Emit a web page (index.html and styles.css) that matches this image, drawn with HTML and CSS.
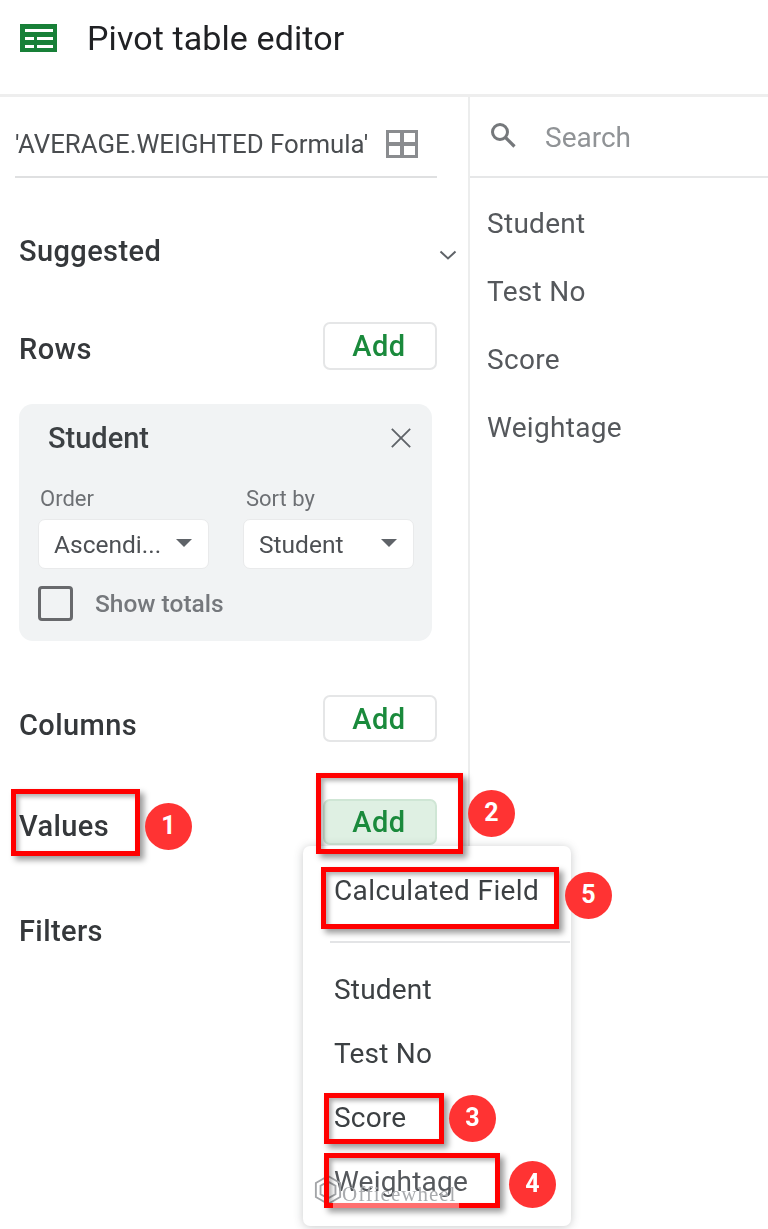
FILE: index.html
```html
<!DOCTYPE html>
<html lang="en">
<head>
<meta charset="utf-8">
<title>Pivot table editor</title>
<link rel="stylesheet" href="styles.css">
</head>
<body>
<div class="page">
  <header class="header">
    <svg class="sheet-icon" viewBox="0 0 37 28"><path fill="#188038" fill-rule="evenodd" d="M0 0h37v28H0zM5 5v3h28V5zM5 13v3h9v-3zM17 13v3h16v-3zM5 21v3h9v-3zM17 21v3h16v-3z"/></svg>
    <h1 class="title">Pivot table editor</h1>
  </header>
  <main class="body">
    <section class="left">
      <div class="source">
        <span class="source-text">'AVERAGE.WEIGHTED Formula'</span>
        <svg class="grid-icon" viewBox="0 0 32 28"><path fill="#8a8c8f" fill-rule="evenodd" d="M0 0h32v28H0zM3 3v9h11V3zM18 3v9h11V3zM3 16v9h11v-9zM18 16v9h11v-9z"/></svg>
      </div>
      <div class="suggested">
        <span class="label">Suggested</span>
        <svg class="chev" viewBox="0 0 18 10"><path fill="none" stroke="#5f6368" stroke-width="2" d="M1.500 1.500 9 8.500l7.500-7"/></svg>
      </div>
      <div class="row rows-row">
        <span class="label">Rows</span>
        <button class="add">Add</button>
      </div>
      <div class="card">
        <div class="card-head">
          <span class="card-title">Student</span>
          <svg class="close" viewBox="0 0 24 24"><path fill="none" stroke="#5f6368" stroke-width="2" d="M2 2l20 20M22 2 2 22"/></svg>
        </div>
        <div class="selects">
          <div class="field">
            <span class="field-label">Order</span>
            <div class="select"><span>Ascendi...</span><i class="caret"></i></div>
          </div>
          <div class="field">
            <span class="field-label">Sort by</span>
            <div class="select"><span>Student</span><i class="caret"></i></div>
          </div>
        </div>
        <div class="totals"><i class="check"></i><span>Show totals</span></div>
      </div>
      <div class="row columns-row">
        <span class="label">Columns</span>
        <button class="add">Add</button>
      </div>
      <div class="row values-row">
        <span class="label">Values</span>
        <button class="add active">Add</button>
      </div>
      <div class="row filters-row">
        <span class="label">Filters</span>
      </div>
    </section>
    <aside class="right">
      <div class="search">
        <svg class="search-icon" viewBox="0 0 26 26"><circle cx="10" cy="10" r="7.500" fill="none" stroke="#75787b" stroke-width="3"/><path stroke="#75787b" stroke-width="3.200" d="m15.500 15.500 9 9"/></svg>
        <span>Search</span>
      </div>
      <ul class="fields">
        <li>Student</li>
        <li>Test No</li>
        <li>Score</li>
        <li>Weightage</li>
      </ul>
    </aside>
  </main>

  <div class="menu">
    <div class="menu-item calc">Calculated Field</div>
    <div class="menu-sep"></div>
    <div class="menu-item">Student</div>
    <div class="menu-item">Test No</div>
    <div class="menu-item">Score</div>
    <div class="menu-item weight">Weightage</div>
  </div>

  <div class="watermark">
    <svg class="wm-logo" viewBox="0 0 30 32"><path fill="none" stroke="#a3a5a8" stroke-width="2" d="M15 1 28 8.500v15L15 31 2 23.500v-15zM15 7l8 4.500v9L15 25l-8-4.500v-9z"/></svg>
    <span>Officewheel</span>
  </div>

  <div class="mark b1"></div><div class="dot d1">1</div>
  <div class="mark b2"></div><div class="dot d2">2</div>
  <div class="mark b3"></div><div class="dot d3">3</div>
  <div class="mark b4"></div><div class="dot d4">4</div>
  <div class="mark b5"></div><div class="dot d5">5</div>
  <div class="wm-strip"></div>
</div>
</body>
</html>
```
FILE: styles.css
```css
* { box-sizing: border-box; }
html, body { margin: 0; padding: 0; background: #fff; }
body { font-family: Roboto, "Liberation Sans", sans-serif; color: #3c4043; }
.page { position: relative; width: 768px; height: 1229px; overflow: hidden; filter: blur(0.6px); }

.header { height: 97px; display: flex; align-items: flex-start; padding: 24px 0 0 20px; border-bottom: 3px solid #eeeeee; }
.sheet-icon { width: 37px; height: 28px; display: block; }
.title { margin: -5px 0 0 30px; font-size: 34px; line-height: 38px; font-weight: 400; color: #202124; letter-spacing: 0.1px; }

.body { display: flex; height: 1132px; }
.left { width: 470px; height: 760px; border-right: 2px solid #eceded; padding: 0 31px 0 15px; flex: none; }
.right { flex: 1; }

.source { height: 81px; padding-top: 28px; display: flex; align-items: flex-start; border-bottom: 2px solid #dfe0e1; }
.source-text { font-size: 25.800px; line-height: 38px; color: #4a4d50; width: 371px; white-space: nowrap; }
.grid-icon { width: 32px; height: 28px; margin-top: 5px; }

.label { font-size: 29px; line-height: 36px; font-weight: 500; color: #35383b; letter-spacing: 0.4px; }
.suggested { display: flex; justify-content: space-between; align-items: center; margin: 55px -20px 0 4px; height: 36px; }
.chev { width: 18px; height: 10px; margin-top: 7px; }

.row { display: flex; align-items: center; justify-content: space-between; padding-left: 4px; }
.rows-row { margin-top: 53px; height: 48px; }
.rows-row .label { margin-top: 6px; }
.columns-row { margin-top: 54px; height: 47px; }
.columns-row .label { margin-top: 12px; }
.values-row { margin-top: 57px; height: 46px; }
.values-row .label { margin-top: 8px; }
.filters-row { margin-top: 68px; height: 36px; }

.add { width: 114px; height: 100%; background: #fff; border: 2px solid #e5e6e7; border-radius: 7px; color: #1a8a3c; font: 500 29px/36px Roboto, sans-serif; padding: 0 2px 0 0; letter-spacing: 0.5px; }
.add.active { background: #dff0e3; border-color: #cfe6d5; }

.card { margin: 34px 5px 0 4px; height: 237px; background: #f1f3f4; border-radius: 14px; padding: 18px 18px 0 19px; }
.card-head { display: flex; justify-content: space-between; align-items: center; height: 32px; padding: 0 2px 0 10px; }
.card-title { font-size: 29px; line-height: 32px; font-weight: 500; color: #3c4043; }
.close { width: 22px; height: 22px; }
.selects { display: flex; justify-content: space-between; margin-top: 35px; }
.field { display: flex; flex-direction: column; width: 171px; }
.field-label { font-size: 22px; line-height: 26px; color: #6d7074; padding-left: 2px; margin-top: -3px; margin-bottom: 7px; }
.field:last-child .field-label { padding-left: 3px; }
.select { height: 50px; background: #fff; border: 1px solid #e9eaeb; border-radius: 7px; display: flex; align-items: center; justify-content: space-between; padding: 0 16px 0 15px; font-size: 24.500px; color: #4d5054; }
.caret { width: 0; height: 0; border-left: 8px solid transparent; border-right: 8px solid transparent; border-top: 8px solid #5f6368; margin-top: -3px; }
.totals { display: flex; align-items: center; gap: 22px; margin-top: 17px; font-size: 24.500px; color: #75787c; font-weight: 500; }
.check { width: 35px; height: 35px; border: 3px solid #68696c; border-radius: 4px; flex: none; }

.search { height: 81px; display: flex; align-items: center; padding-left: 20px; gap: 29px; border-bottom: 2px solid #e6e7e8; font-size: 28px; color: #909396; }
.search span { margin-top: 2px; }
.search-icon { width: 26px; height: 26px; margin-top: -4px; }
.fields { list-style: none; margin: 0; padding: 29px 0 0 17px; }
.fields li { height: 68px; font-size: 28px; line-height: 34px; color: #55585c; letter-spacing: 0.3px; }

.menu { position: absolute; left: 303px; top: 846px; width: 268px; height: 380px; background: #fff; border-radius: 7px; box-shadow: 0 1px 10px rgba(60,64,67,.28); padding-top: 26px; }
.menu-item { font-size: 28px; line-height: 38px; height: 64px; padding-left: 31px; color: #3c4043; white-space: nowrap; letter-spacing: 0.2px; }
.menu-item.calc { height: 69px; letter-spacing: 0.4px; }
.menu-sep { margin: 0 0 28px 27px; width: 240px; height: 2px; background: #e3e4e6; }
.menu-item.weight { color: #55585c; }

.mark { position: absolute; border: 5px solid #ff0000; box-shadow: 4px 4px 6px rgba(0,0,0,.4), inset 3px 3px 4px rgba(0,0,0,.3); }
.b1 { left: 11px; top: 789px; width: 129px; height: 67px; }
.b2 { left: 316px; top: 773px; width: 147px; height: 81px; }
.b3 { left: 324px; top: 1093px; width: 120px; height: 51px; }
.b4 { left: 324px; top: 1153px; width: 176px; height: 55px; }
.b5 { left: 321px; top: 867px; width: 238px; height: 62px; }

.dot { position: absolute; width: 47px; height: 47px; border-radius: 50%; background: #ff3333; color: #fff; font-weight: 700; font-size: 25px; line-height: 45px; text-align: center; }
.d1 { left: 145px; top: 803px; }
.d2 { left: 468px; top: 790px; }
.d3 { left: 449px; top: 1095px; }
.d4 { left: 509px; top: 1161px; }
.d5 { left: 565px; top: 872px; }

.watermark { position: absolute; left: 314px; top: 1172px; display: flex; align-items: center; gap: 0; font: 21px/28px "Liberation Serif", serif; color: #a9abae; letter-spacing: 1px; }
.watermark span { margin-top: 8px; }
.wm-logo { width: 28px; height: 32px; }
.wm-strip { position: absolute; left: 333px; top: 1203px; width: 126px; height: 5px; background: #ff7070; }
```
